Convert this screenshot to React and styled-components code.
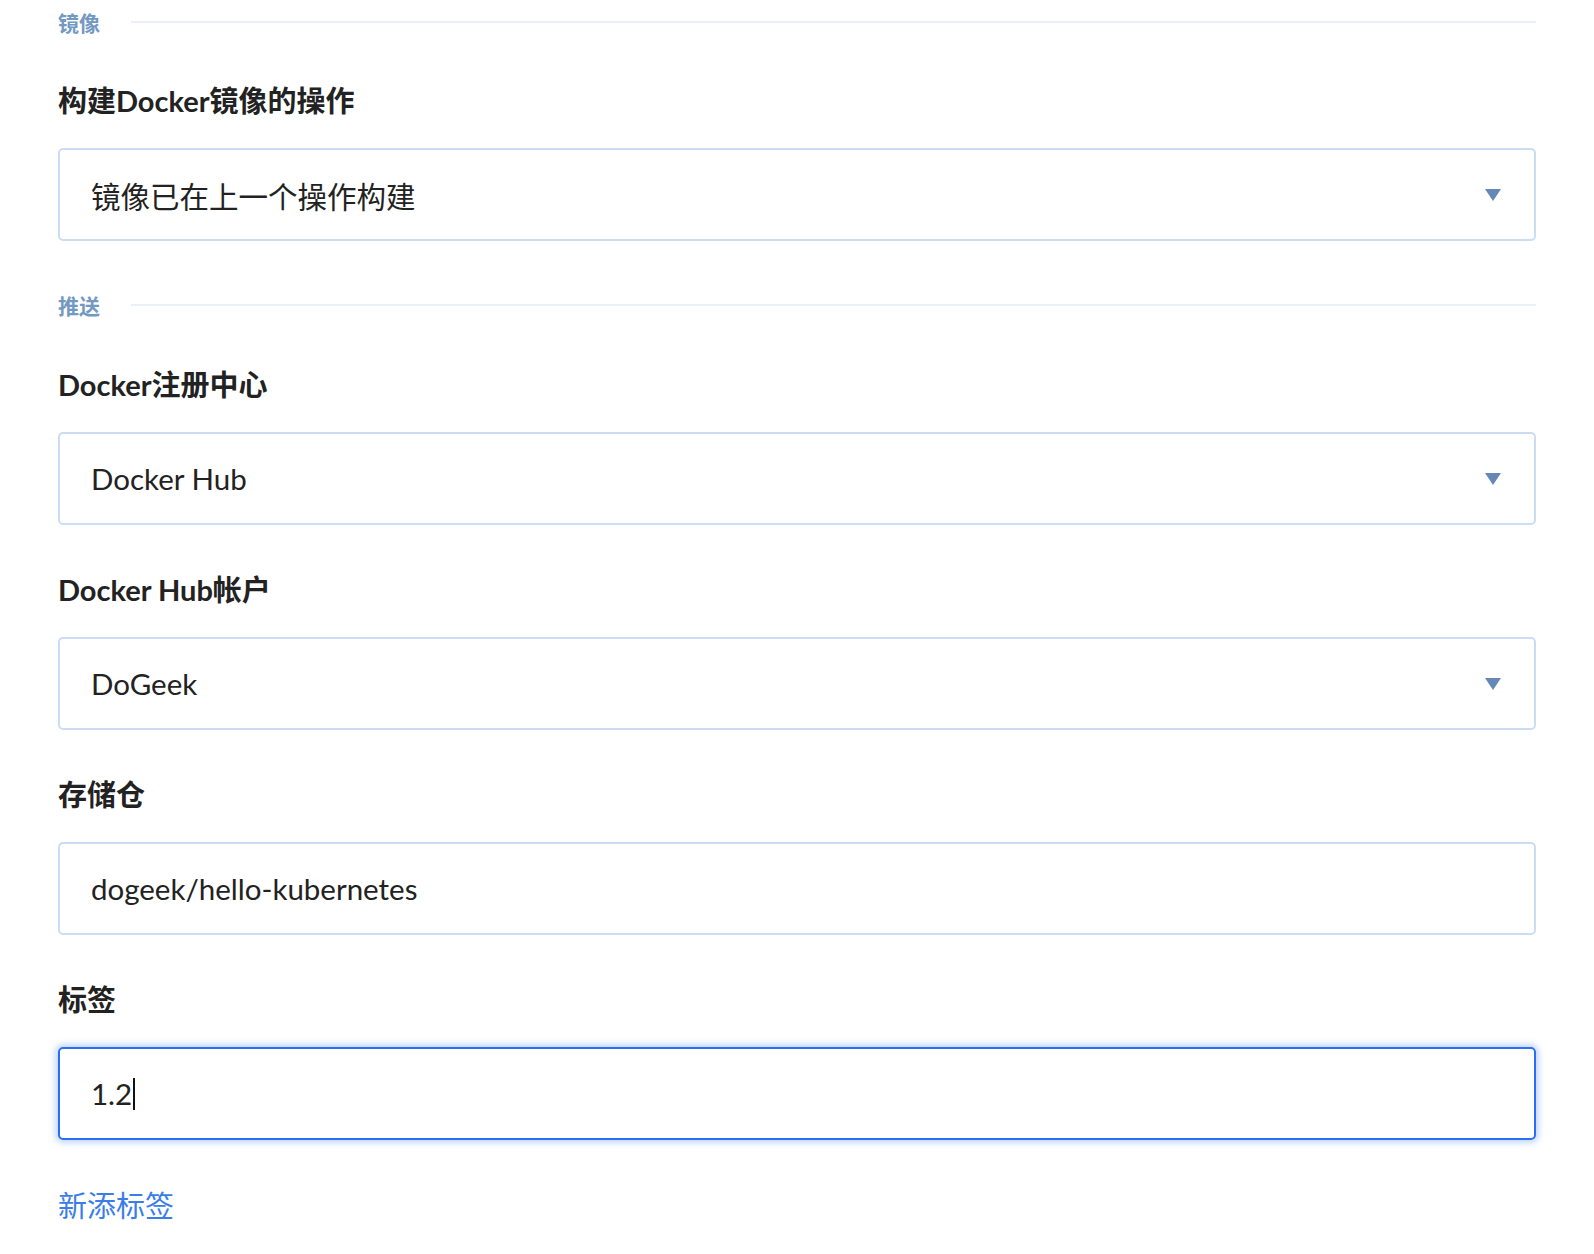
import React from "react";
import styled, { createGlobalStyle } from "styled-components";

const GlobalStyle = createGlobalStyle`
  body {
    margin: 0;
    background: #ffffff;
    font-family: Lato, "Noto Sans CJK SC", sans-serif;
    color: #222;
  }
`;

const Page = styled.div`
  padding: 10px 58px 0 58px;
  display: flex;
  flex-direction: column;
`;

const SectionHeader = styled.div`
  display: flex;
  align-items: center;
  gap: 31px;
  height: 24px;
  font-size: 21px;
  font-weight: 700;
  color: #7399c3;
  margin-top: ${(props) => props.marginTop || "0"};

  &::after {
    content: "";
    flex: 1;
    height: 2px;
    background: #e9f0f9;
  }
`;

const Label = styled.div`
  font-size: 29px;
  font-weight: 700;
  line-height: 32px;
  color: #222;
  margin-top: ${(props) => props.marginTop || "49px"};
  margin-bottom: 31px;
`;

const Box = styled.div`
  position: relative;
  box-sizing: border-box;
  height: 93px;
  border: 2px solid ${(props) => (props.focused ? "#2a6ff2" : "#cbdcf4")};
  border-radius: 5px;
  box-shadow: ${(props) =>
    props.focused ? "0 0 7px 2px rgba(42, 111, 242, 0.35)" : "none"};
  display: flex;
  align-items: center;
  padding: 0 31px;
  font-size: 29.5px;
  color: #222;
`;

const Arrow = styled.span`
  position: absolute;
  right: 33px;
  top: 50%;
  margin-top: -6px;
  width: 0;
  height: 0;
  border-left: 8px solid transparent;
  border-right: 8px solid transparent;
  border-top: 12px solid #6688b6;
`;

const Caret = styled.span`
  display: inline-block;
  width: 2px;
  height: 32px;
  background: #111;
  margin-left: 1px;
  vertical-align: middle;
`;

const AddLink = styled.a`
  margin-top: 48px;
  font-size: 29px;
  color: #3a7de8;
  text-decoration: none;
  line-height: 36px;
  cursor: pointer;
`;

function Select({ value }) {
  return (
    <Box>
      {value}
      <Arrow />
    </Box>
  );
}

export default function App() {
  return (
    <>
      <GlobalStyle />
      <Page>
        <SectionHeader>镜像</SectionHeader>
        <Label marginTop="51px">构建Docker镜像的操作</Label>
        <Select value="镜像已在上一个操作构建" />

        <SectionHeader marginTop="52px">推送</SectionHeader>
        <Label marginTop="52px">Docker注册中心</Label>
        <Select value="Docker Hub" />

        <Label>Docker Hub帐户</Label>
        <Select value="DoGeek" />

        <Label>存储仓</Label>
        <Box>dogeek/hello-kubernetes</Box>

        <Label>标签</Label>
        <Box focused>
          <span>1.2</span>
          <Caret />
        </Box>

        <AddLink>新添标签</AddLink>
      </Page>
    </>
  );
}
